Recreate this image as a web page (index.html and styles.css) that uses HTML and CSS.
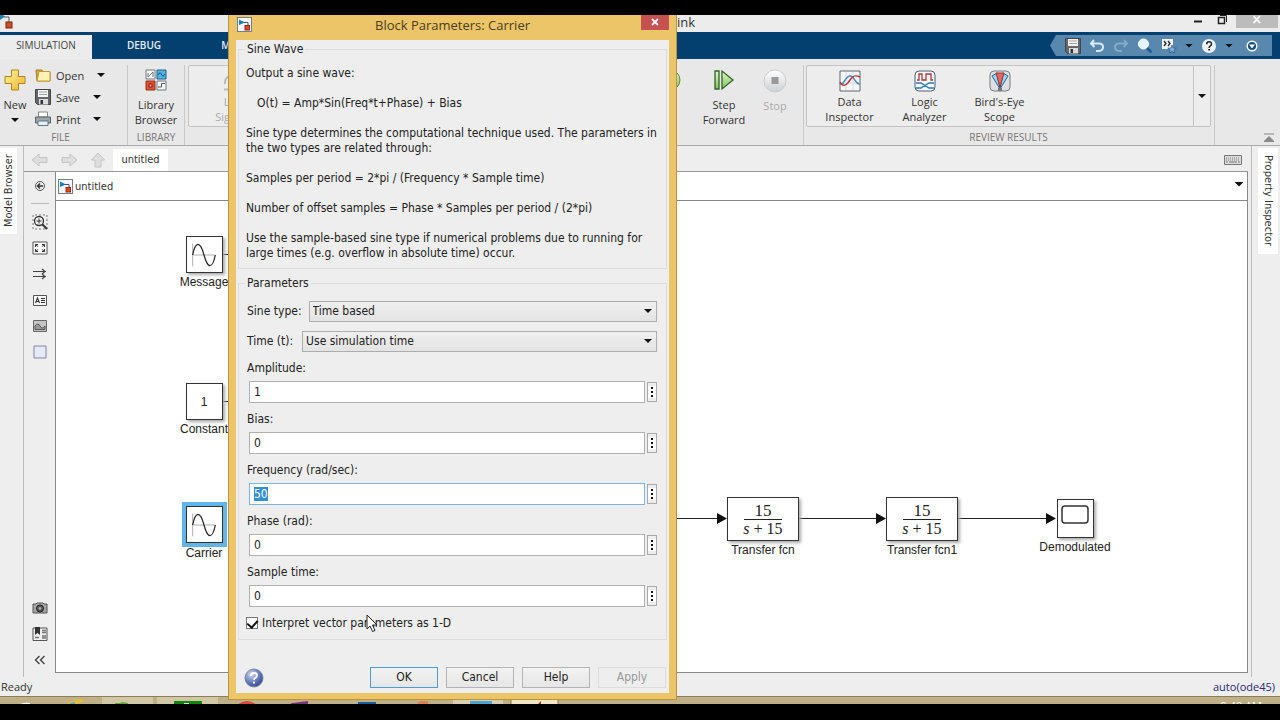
FILE: index.html
```html
<!DOCTYPE html>
<html lang="en">
<head>
<meta charset="utf-8">
<title>Simulink</title>
<link rel="stylesheet" href="styles.css">
</head>
<body>
<svg class="defs" aria-hidden="true">
  <defs>
    <linearGradient id="gold" x1="0" y1="0" x2="1" y2="1"><stop offset="0" stop-color="#fff3a0"/><stop offset="1" stop-color="#eeb32c"/></linearGradient>
    <linearGradient id="paper" x1="0" y1="0" x2="0" y2="1"><stop offset="0" stop-color="#fff"/><stop offset="1" stop-color="#ccd0d4"/></linearGradient>
    <linearGradient id="green" x1="0" y1="0" x2="0" y2="1"><stop offset="0" stop-color="#e2f7d0"/><stop offset="1" stop-color="#7dc453"/></linearGradient>
    <radialGradient id="orb" cx=".35" cy=".3" r=".75"><stop offset="0" stop-color="#d4dcf2"/><stop offset=".6" stop-color="#6379b8"/><stop offset="1" stop-color="#34488a"/></radialGradient>
    <symbol id="model" viewBox="0 0 15 15"><rect x=".5" y=".5" width="14" height="14" fill="#f5f6f8" stroke="#777d85"/><path d="M2 2.500 8 5.500 2 8z" fill="#167fb3"/><path d="M7 5.500h4V9" fill="none" stroke="#3b5a72"/><rect x="8" y="8.500" width="4.500" height="4.500" fill="#da4a24" stroke="#8f2b12"/></symbol>
    <symbol id="disk" viewBox="0 0 16 16"><path d="M.5.5h15v15h-13l-2-2z" fill="#65686b" stroke="#424548"/><path d="M3 1h10v7H3z" fill="#f4f4f4"/><path d="M4 3h8M4 5.500h8" stroke="#a2a4a6"/><path d="M4 10h9v5.500H4z" fill="#dadcde"/><path d="M5.500 11h2.500v4H5.500z" fill="#333"/></symbol>
    <symbol id="sine" viewBox="0 0 36 36"><path d="M6 6v24M6 18h24" stroke="#aaa" fill="none"/><path d="M6 18C9 3 14 3 18 18s9 15 12 0" fill="none" stroke="#222" stroke-width="1.300"/></symbol>
  </defs>
</svg>

<div class="screen">
  <header class="titlebar">
    <svg class="title-icon" viewBox="0 0 14 14"><path d="M0 0h3l2 1.500L0 5z" fill="#1b82b5"/><path d="M4 2h5v5" fill="none" stroke="#555"/><rect x="6" y="7" width="6" height="6" fill="#d64a26" stroke="#74260f"/></svg>
    <h1 class="title-text">untitled * - Simulink</h1>
    <div class="window-buttons">
      <button class="win-btn" aria-label="Minimize"><svg width="10" height="10"><path d="M1 6.500h8" stroke="#222" stroke-width="2"/></svg></button>
      <button class="win-btn" aria-label="Restore"><svg width="10" height="10"><path d="M1.500 2.500h6v6h-6z" fill="none" stroke="#222" stroke-width="1.500"/><path d="M3 .5h6.500V7" fill="none" stroke="#222"/></svg></button>
      <button class="win-btn win-close" aria-label="Close"><svg width="10" height="10"><path d="M1.500 1l6.500 7M8 1 1.500 8" stroke="#fff" stroke-width="1.800"/></svg></button>
    </div>
  </header>

  <nav class="tabs">
    <button class="tab tab-active">SIMULATION</button>
    <button class="tab">DEBUG</button>
    <button class="tab">MODELING</button>
    <div class="quick">
      <button class="q q-save" aria-label="Save"><svg width="16" height="16"><use href="#disk"/></svg></button>
      <button class="q" aria-label="Undo"><svg width="16" height="16"><path d="M5 2 2 5.500 5.500 9M2.500 5.500H10q4 0 4 3.500t-4 4H7" fill="none" stroke="#d9e9f5" stroke-width="2"/></svg></button>
      <button class="q" aria-label="Redo"><svg width="16" height="16"><path d="m11 2 3 3.500L10.500 9M13.500 5.500H6q-4 0-4 3.500t4 4h3" fill="none" stroke="#86a9c5" stroke-width="2"/></svg></button>
      <button class="q" aria-label="Search"><svg width="16" height="16"><path d="m9 9 5.500 5.500" stroke="#1d5c98" stroke-width="2.500"/><circle cx="6.500" cy="6" r="5" fill="#e5f3fb" stroke="#fff"/></svg></button>
      <button class="q" aria-label="Favorites"><svg width="16" height="16"><path d="M1 1h11v10H1z" fill="#f2f3f4"/><path d="m3 3 2 2.500L3 8M7 3l2 2.500L7 8" fill="none" stroke="#222" stroke-width="1.300"/><path d="m11 7 1.300 3 3 .2-2.300 2 .7 3L11 13.500 8.400 15.200l.7-3-2.300-2 3-.2z" fill="#7fb0dc" stroke="#315f8d" stroke-width=".8"/></svg></button>
      <i class="caret"></i>
      <button class="q" aria-label="Help"><svg width="16" height="16"><circle cx="8" cy="8" r="7" fill="#eef3f7"/><path d="M5.700 6.200q0-2.500 2.400-2.500t2.400 2.200q0 1.300-1.200 2T8.100 10" fill="none" stroke="#222" stroke-width="1.500"/><path d="M7.300 11h1.600v1.500H7.300z"/></svg></button>
      <i class="caret"></i>
      <button class="q q-last" aria-label="Customize"><svg width="16" height="16"><circle cx="8" cy="8" r="4.800" fill="#17507f" stroke="#fff" stroke-width="1.500"/><path d="M5 6.500h6L8 10.500z" fill="#fff"/></svg></button>
    </div>
  </nav>

  <section class="strip">
    <div class="section section-file">
      <div class="section-body">
        <button class="big big-new"><svg width="22" height="22"><path d="M7.500 1h7v6.500H21v7h-6.500V21h-7v-6.500H1v-7h6.500z" fill="url(#gold)" stroke="#b4841a"/></svg><span>New</span><i class="caret"></i></button>
        <div class="file-list">
          <button class="row-btn"><svg width="16" height="16"><path d="M1 3h6l1 2h7v9H2z" fill="#d5a436" stroke="#a8802a"/><path d="M4 4.500h11v9.500H2z" fill="#fff2b2" stroke="#c2983c"/></svg><span class="row-open">Open</span><i class="caret"></i></button>
          <button class="row-btn"><svg width="16" height="16"><use href="#disk"/></svg><span>Save</span><i class="caret"></i></button>
          <button class="row-btn"><svg width="16" height="16"><path d="M3.500 1h9v5h-9z" fill="#fff" stroke="#888"/><path d="M.5 6h15v6H.5z" fill="#9ca5ad" stroke="#5a6269"/><path d="M3 10h10v4.500H3z" fill="#e2f0fa" stroke="#68737d"/></svg><span>Print</span><i class="caret"></i></button>
        </div>
      </div>
      <div class="section-name">FILE</div>
    </div>
    <div class="section section-library">
      <div class="section-body">
        <button class="big"><svg width="22" height="22"><path d="M1 1h9v9H1z" fill="#f4f5f6" stroke="#717980"/><path d="M3 8V4M3 8l5-5v5" fill="none" stroke="#777"/><path d="M12 1h9v9h-9z" fill="#50b5e5" stroke="#225f84"/><path d="M13 6q2-4 3.500-.5T20 5" fill="none" stroke="#134f78"/><path d="M1 12h9v9H1z" fill="#e2512b" stroke="#8f3118"/><path d="M4 15h3v3H4z" fill="#f7b597" stroke="#812"/><path d="M12 12h9v9h-9z" fill="#f4f5f6" stroke="#717980"/><path d="M13 18h3.500v-3.500H20" fill="none" stroke="#555"/></svg><span>Library<br>Browser</span></button>
      </div>
      <div class="section-name">LIBRARY</div>
    </div>
    <div class="section section-prepare">
      <div class="section-body"><div class="gallery gallery-off">
        <button class="big" disabled><svg width="26" height="22"><path d="M5 14a8 8 0 0 1 12-8M9 14a4 4 0 0 1 6-4M4 19.500h16" fill="none" stroke="#b9b9b9" stroke-width="2"/></svg><span>Log<br>Signals</span></button>
      </div></div>
    </div>
    <div class="section section-simulate">
      <div class="section-body">
        <svg class="run" viewBox="0 0 22 22"><circle cx="11" cy="11" r="10" fill="url(#green)" stroke="#568b36"/></svg>
        <button class="big big-step"><svg width="22" height="22"><path d="M2 2h4v18H2z" fill="url(#green)" stroke="#2f642b" stroke-width="1.300"/><path d="M9 2v18l11-9z" fill="url(#green)" stroke="#2f642b" stroke-width="1.300"/></svg><span>Step<br>Forward</span></button>
        <button class="big big-stop" disabled><svg width="24" height="24"><circle cx="12" cy="12" r="11" fill="url(#paper)" stroke="#ccc"/><path d="M8.500 8h7v7h-7z" fill="#999"/></svg><span>Stop</span></button>
      </div>
    </div>
    <div class="section section-review">
      <div class="section-body"><div class="gallery">
        <button class="big"><svg width="22" height="22"><path d="M1 1h20v20H1z" fill="#f6f7f9" stroke="#60666c"/><path d="M2 13h18M7 2v18M14 2v18" stroke="#d9dce0"/><path d="M1 13C4 18 6 6 11 6s5 9 10 8" fill="none" stroke="#4a8dc0" stroke-width="1.500"/><path d="M1 12c3 6 7 3 10-2s6-5 10-3" fill="none" stroke="#b53c39" stroke-width="1.500"/></svg><span>Data<br>Inspector</span></button>
        <button class="big"><svg width="22" height="22"><rect x="1" y="1" width="20" height="20" rx="4" fill="#f5f7f9" stroke="#4a6078"/><path d="M3 10h2V4h3v6h4V4h5v6h2" fill="none" stroke="#a63935" stroke-width="1.300"/><path d="M2 13h5l8 5h5M2 18h5l8-5h5" fill="none" stroke="#2d78ac" stroke-width="1.300"/></svg><span>Logic<br>Analyzer</span></button>
        <button class="big"><svg width="22" height="22"><rect x="1" y="1" width="20" height="20" rx="4" fill="#dde0e2" stroke="#767c80"/><path d="m11 19-8-13 5-3z" fill="#99d3ef" stroke="#27698f"/><path d="m11 19 8-13-5-3z" fill="#99d3ef" stroke="#27698f"/><path d="m11 17-4-14h8z" fill="#e46865" stroke="#9d3033"/><path d="M9 18h4v3H9z" fill="#777"/></svg><span>Bird's-Eye<br>Scope</span></button>
        <button class="gallery-more" aria-label="More"><i class="caret"></i></button>
      </div></div>
      <div class="section-name">REVIEW RESULTS</div>
    </div>
    <div class="strip-end"><button class="collapse" aria-label="Collapse"><svg width="10" height="9"><path d="M0 1h10M0 8.500h10L5 3.500z" fill="#888" stroke="#888"/></svg></button></div>
  </section>

  <main class="work">
    <aside class="side side-left"><button class="side-tab">Model Browser</button></aside>
    <div class="editor">
      <div class="doc-tabs">
        <svg width="18" height="16"><path d="m1 8 7-6v3.500h8v5H8V14z" fill="#dedede" stroke="#c4c4c4"/></svg>
        <svg width="18" height="16"><path d="m17 8-7-6v3.500H2v5h8V14z" fill="#dedede" stroke="#c4c4c4"/></svg>
        <svg width="18" height="16"><path d="m9 1 6.500 7H12v7H6V8H2.500z" fill="#dedede" stroke="#c4c4c4"/></svg>
        <button class="doc-tab">untitled</button>
        <svg class="keyboard" width="18" height="10"><path d="M.5.500h17v9H.5z" fill="#ddd" stroke="#777"/><path d="M2 3h14M2 5h14" stroke="#777" stroke-dasharray="1 1"/><path d="M2 7h2M5 7h8M14 7h2" stroke="#777"/></svg>
      </div>
      <div class="editor-body">
        <div class="palette">
          <button class="tool tool-first" aria-label="Hide browser"><svg width="16" height="16"><circle cx="8" cy="8" r="4.500" fill="none" stroke="#555"/><path d="M11 8H6M8 5.500 5.500 8 8 10.500" fill="none" stroke="#333" stroke-width="1.400"/></svg></button>
          <button class="tool" aria-label="Zoom"><svg width="16" height="16"><path d="M1 15V1h14v14z" fill="none" stroke="#777" stroke-dasharray="2 2"/><path d="m10 10 5 5" stroke="#333" stroke-width="2"/><circle cx="7" cy="7" r="4.500" fill="#f1f1f1" stroke="#333" stroke-width="1.300"/><path d="M4.500 7h5M7 4.500v5" stroke="#333"/></svg></button>
          <button class="tool" aria-label="Fit to view"><svg width="16" height="16"><path d="M1 2h14v12H1z" fill="#f7f7f7" stroke="#555"/><path d="M3.500 7V4.500H6M3.500 4.500 6 6.500M12.500 7V4.500H10M12.500 4.500 10 6.500M3.500 9v2.500H6M3.500 11.500 6 9.500M12.500 9v2.500H10M12.500 11.500 10 9.500" fill="none" stroke="#333"/></svg></button>
          <button class="tool" aria-label="Sample time"><svg width="16" height="16"><path d="M1 5.500h13M1 10.500h13M10 3l3 2.500L10 8M10 8l3 2.500-3 2.500" fill="none" stroke="#444" stroke-width="1.200"/></svg></button>
          <button class="tool" aria-label="Annotation"><svg width="16" height="16"><path d="M1.500 3.500h13v10h-13z" fill="#f7f7f7" stroke="#555"/><path d="m3.500 11 2-5 2 5M4.500 9.500h2M9 6.500h4M9 8.500h4M9 10.500h4" fill="none" stroke="#333" stroke-width="1.100"/></svg></button>
          <button class="tool" aria-label="Image"><svg width="16" height="16"><path d="M1.500 2.500h13v11h-13z" fill="#c4c4c4" stroke="#666"/><path d="M3 11.500V8q3-4 5 0t5 0v3.500z" fill="#9a9a9a" stroke="#555"/></svg></button>
          <button class="tool" aria-label="Area"><svg width="16" height="16"><path d="M2 2h12v12H2z" fill="#e6e9f8" stroke="#7d879b"/></svg></button>
          <button class="tool tool-camera" aria-label="Screenshot"><svg width="16" height="16"><path d="M1 4h3l1-1h6l1 1h3v9H1z" fill="#a4a4a4" stroke="#555"/><circle cx="8" cy="8.500" r="3.500" fill="#555" stroke="#222"/><circle cx="8" cy="8.500" r="1.400" fill="#aaa"/></svg></button>
          <button class="tool" aria-label="Reports"><svg width="16" height="16"><path d="M1 2h14v12.500H1z" fill="#eee" stroke="#555"/><path d="M3 1h5v8L5.500 7 3 9z" fill="#333"/><path d="M10 4.500h4M10 6.500h4M10 10h4M10 12h4M3 11.500h4" stroke="#777" stroke-width="1.500"/></svg></button>
          <button class="tool" aria-label="Collapse palette"><svg width="16" height="16"><path d="M7.500 4 3.500 8l4 4M12.500 4l-4 4 4 4" fill="none" stroke="#444" stroke-width="1.400"/></svg></button>
        </div>
        <div class="view">
          <div class="crumb"><svg width="15" height="15"><use href="#model"/></svg><span>untitled</span><i class="caret caret-big"></i></div>
          <div class="canvas">
            <svg class="wires"><path d="M165 53.500h9M165 200.500h9M600 317.500h64M742 317.500h80M901 317.500h91" stroke="#222" fill="none"/><path d="m661 312 10 5.500-10 5.500zM820 312l10 5.500-10 5.500zM990 312l10 5.500-10 5.500zM167 318l4 5.500-4 5.500z" fill="#111"/></svg>
            <div class="node node-message"><div class="block"><svg width="34" height="34"><use href="#sine"/></svg></div><span>Message</span></div>
            <div class="node node-constant"><div class="block">1</div><span>Constant</span></div>
            <div class="node node-carrier"><div class="block block-selected"><svg width="34" height="34"><use href="#sine"/></svg></div><span>Carrier</span></div>
            <div class="node node-tf"><div class="block block-tf"><span class="num">15</span><span class="den"><em>s</em> + 15</span></div><span>Transfer fcn</span></div>
            <div class="node node-tf1"><div class="block block-tf"><span class="num">15</span><span class="den"><em>s</em> + 15</span></div><span>Transfer fcn1</span></div>
            <div class="node node-scope"><div class="block block-scope"><svg width="28" height="19"><rect x="1" y="1" width="26" height="17" rx="3" fill="none" stroke="#333" stroke-width="1.500"/></svg></div><span>Demodulated</span></div>
          </div>
        </div>
      </div>
    </div>
    <aside class="side side-right"><button class="side-tab side-tab-right">Property Inspector</button></aside>
  </main>

  <footer class="status"><span>Ready</span><a class="solver" href="#">auto(ode45)</a></footer>
  <div class="taskbar">
    <svg class="task-icons" width="560" height="8"><path d="M102 0h51v8h-51zM157 0h61v8h-61z" fill="#d2c7a5"/><path d="M453 0h50v8h-50z" fill="#d8ceb0"/><path d="M511 0h47v8h-47z" fill="#efe6c6" stroke="#877848"/><path d="M18 8q6-3 12-2v2z" fill="#fff"/><path d="M65 8q5-5 17-6l2 2-9 4z" fill="#e3bf38"/><path d="M68 8q3-3 7-3v3z" fill="#5ba8d3"/><path d="M115 8V6h5l2-1 6 1v2z" fill="#63a63e"/><path d="M174 4h28v4h-28z" fill="#11860f"/><path d="M184 6h5v2h-5z" fill="#d4ecd3"/><path d="M237 8q10-8 20 0z" fill="#d94b3a"/><path d="M292 6l16-2v4h-20z" fill="#78357d"/><path d="M358 5h18v3h-18z" fill="#1b5ba0"/><path d="M416 8l4-4h8v4z" fill="#dd8054"/><path d="M470 4h22v4h-22z" fill="#4fa6d6"/><path d="m537 8 4-4v4z" fill="#a13916"/></svg>
    <span class="clock">9:40 AM</span>
  </div>

  <form class="dialog" aria-labelledby="dialog-title">
    <div class="dialog-bar">
      <svg width="15" height="15"><use href="#model"/></svg>
      <h2 id="dialog-title">Block Parameters: Carrier</h2>
      <button type="button" class="dialog-close" aria-label="Close dialog"><svg width="10" height="10"><path d="m2 2 6 6M8 2 2 8" stroke="#fff" stroke-width="1.800"/></svg></button>
    </div>
    <div class="dialog-body">
      <fieldset class="about">
        <legend>Sine Wave</legend>
        <p>Output a sine wave:</p>
        <p class="formula">O(t) = Amp*Sin(Freq*t+Phase) + Bias</p>
        <p>Sine type determines the computational technique used. The parameters in<br>the two types are related through:</p>
        <p>Samples per period = 2*pi / (Frequency * Sample time)</p>
        <p>Number of offset samples = Phase * Samples per period / (2*pi)</p>
        <p>Use the sample-based sine type if numerical problems due to running for<br>large times (e.g. overflow in absolute time) occur.</p>
      </fieldset>
      <fieldset class="params">
        <legend>Parameters</legend>
        <div class="pick"><label for="sinetype">Sine type:</label><div class="select-wrap"><select id="sinetype"><option>Time based</option></select><i class="caret"></i></div></div>
        <div class="pick pick-time"><label for="time">Time (t):</label><div class="select-wrap"><select id="time"><option>Use simulation time</option></select><i class="caret"></i></div></div>
        <div class="field"><label for="amp">Amplitude:</label><div class="entry"><input id="amp" type="text" value="1"><button type="button" class="dots" aria-label="Amplitude options"></button></div></div>
        <div class="field"><label for="bias">Bias:</label><div class="entry"><input id="bias" type="text" value="0"><button type="button" class="dots" aria-label="Bias options"></button></div></div>
        <div class="field"><label for="freq">Frequency (rad/sec):</label><div class="entry"><input id="freq" type="text" value="50"><button type="button" class="dots" aria-label="Frequency options"></button></div></div>
        <div class="field"><label for="phase">Phase (rad):</label><div class="entry"><input id="phase" type="text" value="0"><button type="button" class="dots" aria-label="Phase options"></button></div></div>
        <div class="field"><label for="sample">Sample time:</label><div class="entry"><input id="sample" type="text" value="0"><button type="button" class="dots" aria-label="Sample time options"></button></div></div>
        <div class="check"><input id="interp" type="checkbox" checked><label for="interp">Interpret vector parameters as 1-D</label></div>
      </fieldset>
      <div class="actions">
        <button type="button" class="help" aria-label="Help"><svg width="20" height="20"><circle cx="10" cy="10" r="9" fill="url(#orb)" stroke="#7b87ab"/><path d="M7 8q0-3 3-3t3 2.500q0 1.500-1.500 2.300T10 12" fill="none" stroke="#fff" stroke-width="1.800"/><path d="M9 13.500h2v2H9z" fill="#fff"/></svg></button>
        <button type="button" class="action action-ok">OK</button>
        <button type="button" class="action">Cancel</button>
        <button type="button" class="action">Help</button>
        <button type="button" class="action" disabled>Apply</button>
      </div>
    </div>
    <svg class="cursor" width="13" height="19"><path d="M1 1v14l3-3 2.500 5.500 2.500-1L6.500 11H11z" fill="#fff" stroke="#222"/></svg>
  </form>
</div>
<script src="app.js"></script>
</body>
</html>
```
FILE: app.js
```js
document.getElementById("freq").select();
```
FILE: styles.css
```css
* { box-sizing: border-box; }
body { margin: 0; background: #000; color: #333; font: 11px/15px "Open Sans", "Noto Sans", sans-serif; }
button { margin: 0; padding: 0; border: 0; background: none; color: inherit; font: inherit; }
svg { display: block; flex: none; }
h1, h2, p { margin: 0; font-size: inherit; font-weight: normal; }
.defs { position: absolute; width: 0; height: 0; }
.caret { display: block; flex: none; width: 8px; height: 4px; background: #111; clip-path: polygon(0 0, 100% 0, 50% 100%); }
.caret-big { width: 10px; height: 5px; }

.screen { position: relative; display: flex; flex-direction: column; height: 100vh; padding: 15px 0 16px; overflow: hidden; }
.titlebar { display: flex; height: 17px; background: #ececec; }
.title-icon { width: 14px; height: 14px; }
.title-text { width: 681px; text-align: right; font-size: 13px; line-height: 14px; }
.window-buttons { display: flex; margin-left: auto; margin-right: 2px; }
.win-btn { display: flex; justify-content: center; width: 24px; height: 12px; }
.win-close { width: 42px; height: 13px; margin-left: 2px; background: #bcbcbc; }

.tabs { display: flex; align-items: flex-end; height: 27px; background: #03406f; color: #e6eef5; }
.tab { width: 104px; height: 24px; padding-bottom: 4px; font-size: 10px; font-weight: 600; }
.tab-active { width: 92px; background: #ececec; color: #444; font-weight: normal; }
.quick { display: flex; align-items: center; gap: 8px; height: 21px; margin: 0 8px 3px auto; padding: 0 12px 0 15px; background: #5888ad; clip-path: polygon(0 50%, 6px 0, 100% 0, 100% 100%, 6px 100%); }
.q-last { margin-left: 3px; }

.strip { display: flex; height: 87px; background: #e8e8e8; border-bottom: 1px solid #aaa; }
.section { display: flex; flex-direction: column; margin: 6px 0 0; border-right: 1px solid #c8c8c8; }
.section-body { display: flex; height: 62px; }
.section-name { padding-top: 3px; text-align: center; font-size: 10px; line-height: 15px; color: #777; }
.big { display: flex; flex-direction: column; align-items: center; gap: 6px; padding-top: 4px; line-height: 15px; }
.big:disabled { color: #aaa; }
.section-file { width: 128px; }
.section-file .section-name { padding-right: 6px; }
.big-new { width: 30px; }
.file-list { display: flex; flex-direction: column; padding-left: 5px; margin-top: -1px; }
.row-btn { display: flex; flex: none; align-items: center; height: 22px; gap: 5px; text-align: left; }
.row-btn span { width: 32px; }
.row-btn .row-open { width: 36px; }
.section-library { width: 57px; align-items: center; }
.section-prepare { width: 460px; border: 0; padding-left: 3px; }
.gallery { display: flex; flex: 1; height: 62px; border: 1px solid #c4c4c4; border-radius: 2px; background: #ededed; }
.gallery .big { width: 75px; gap: 2px; }
.gallery-off .big { width: 88px; }
.section-simulate { width: 159px; }
.run { width: 22px; height: 22px; margin: 4px 0 0 14px; }
.big-step { width: 46px; margin-left: 20px; }
.big-stop { width: 50px; margin-left: 3px; gap: 5px; }
.section-review { flex: 1; padding: 0 3px 0 2px; }
.section-review .gallery { padding-left: 5px; }
.gallery-more { display: flex; align-items: center; justify-content: center; width: 17px; margin-left: auto; border-left: 1px solid #c4c4c4; }
.strip-end { display: flex; align-items: flex-end; justify-content: flex-end; width: 65px; padding: 0 6px 3px; }

.work { display: flex; flex: 1; min-height: 0; background: #eee; }
.side { display: flex; align-items: flex-start; width: 24px; padding-top: 2px; border-right: 1px solid #bbb; }
.side-tab { width: 17px; height: 86px; background: #fff; writing-mode: vertical-rl; transform: rotate(180deg); font: 11px/17px "DejaVu Sans Condensed", sans-serif; text-align: center; white-space: nowrap; }
.side-right { width: 29px; padding-left: 6px; border: 0; border-left: 1px solid #bbb; }
.side-tab-right { width: 20px; height: 106px; transform: none; line-height: 20px; }
.editor { display: flex; flex: 1; flex-direction: column; min-width: 0; margin-bottom: 4px; padding-right: 3px; }
.doc-tabs { display: flex; align-items: center; gap: 11px; height: 26px; padding: 3px 0 0 7px; border-bottom: 1px solid #999; }
.doc-tab { align-self: flex-end; width: 55px; height: 22px; margin-left: -5px; background: #fff; font: 11px/22px "DejaVu Sans Condensed", sans-serif; }
.keyboard { margin: 0 6px 0 auto; }
.editor-body { display: flex; flex: 1; min-height: 0; }
.palette { display: flex; flex-direction: column; align-items: center; gap: 10px; width: 31px; padding: 6px 0 5px; }
.tool { display: block; height: 16px; }
.tool-first { display: flex; align-items: flex-start; height: 26px; width: 18px; padding-left: 1px; border-bottom: 1px solid #bbb; }
.tool-camera { margin-top: auto; }
.view { display: flex; flex: 1; flex-direction: column; border: 1px solid #888; border-top: 0; background: #fff; min-width: 0; }
.crumb { display: flex; align-items: center; gap: 2px; height: 29px; padding: 0 3px 0 2px; border-bottom: 1px solid #888; font: 11px/15px "DejaVu Sans Condensed", sans-serif; }
.crumb .caret { margin: 0 0 4px auto; }
.canvas { position: relative; flex: 1; overflow: hidden; }

.wires { position: absolute; width: 100%; height: 100%; }
.node { position: absolute; display: flex; flex-direction: column; align-items: center; gap: 2px; width: 80px; font: 12px/14px "Liberation Sans", Arial, sans-serif; color: #222; white-space: nowrap; }
.block { display: flex; align-items: center; justify-content: center; width: 37px; height: 37px; border: 1px solid #333; background: #fff; box-shadow: 2px 2px 3px #aaa; }
.block-selected { box-shadow: 0 0 0 4px #62b5e8; }
.block-tf { flex-direction: column; width: 72px; height: 44px; font: 17px/17px "Liberation Serif", serif; }
.num { width: 38px; border-bottom: 1px solid #222; text-align: center; }
.den { font-size: 16px; }
.block-scope { height: 39px; align-items: flex-start; padding-top: 5px; }
.node-message { left: 108px; top: 35px; }
.node-constant { left: 108px; top: 182px; }
.node-carrier { left: 108px; top: 305px; gap: 3px; }
.node-tf { left: 667px; top: 296px; }
.node-tf1 { left: 826px; top: 296px; }
.node-scope { left: 979px; top: 298px; }

.status { display: flex; justify-content: space-between; height: 19px; padding: 2px 5px 0 1px; background: #eee; }
.solver { color: #292975; text-decoration: none; }
.taskbar { display: flex; justify-content: space-between; height: 8px; overflow: hidden; border-top: 1px solid #8b7e58; background: #bfb088; }
.clock { margin-right: 18px; padding-top: 3px; color: #fff; line-height: 12px; }

.dialog { position: absolute; left: 228px; top: 15px; width: 449px; padding: 0 7px 6px; background: #ecc568; border: 1px solid #ba9540; border-top: 0; color: #222; font: 12px/15px "DejaVu Sans Condensed", "Noto Sans", sans-serif; }
.dialog-bar { display: flex; align-items: flex-start; height: 25px; }
.dialog-bar > svg { margin: 2px 0 0 1px; }
.dialog-bar h2 { flex: 1; padding-left: 12px; text-align: center; font: 13px/21px "Open Sans", sans-serif; color: #4a3d20; }
.dialog-close { display: flex; justify-content: center; width: 28px; height: 15px; padding-top: 2px; background: #c75050; }
.dialog-body { padding: 1px 2px 5px; background: #eee; }
fieldset { min-width: 0; margin: 0; border: 1px solid #ddd; }
legend { padding: 0 2px; line-height: 16px; }
.about { padding: 9px 7px 7px; }
.about p + p { margin-top: 15px; }
.about legend { margin-left: -1px; }
.formula { padding-left: 11px; }
.params { display: flex; flex-direction: column; gap: 8px; margin-top: 6px; padding: 10px 8px 8px; }
.params legend { margin-left: -2px; }
.pick { display: flex; align-items: center; height: 21px; margin-right: 1px; gap: 7px; }
.pick-time { margin: 1px 1px 0 0; gap: 9px; }
.select-wrap { position: relative; flex: 1; }
select { display: block; width: 100%; height: 21px; padding: 0 3px; border: 1px solid #adadad; border-radius: 0; appearance: none; background: linear-gradient(#f0f0f0, #e3e3e3); color: #222; font: inherit; }
.select-wrap .caret { position: absolute; right: 5px; top: 8px; pointer-events: none; }
.field { display: flex; flex-direction: column; gap: 5px; }
.field label { line-height: 16px; }
.entry { display: flex; align-items: center; gap: 2px; padding: 0 1px 0 2px; }
.entry input { flex: 1; min-width: 0; height: 22px; padding: 0 4px; border: 1px solid #b0b0b0; background: #fff; color: #222; font: inherit; }
.entry input:focus { outline: 0; border-color: #7db6dc; }
.entry input::selection { background: #3390d8; color: #fff; }
.dots { width: 10px; height: 20px; border: 1px solid #aaa; background: radial-gradient(circle, #111 1px, #fff 1px) center / 8px 4px repeat-y content-box; padding: 3px 0; background-color: #fff; }
.check { display: flex; align-items: center; gap: 4px; height: 16px; margin-left: -1px; }
.check input { appearance: none; width: 12px; height: 12px; margin: 0; border: 1px solid #777; background: #fff; display: flex; justify-content: center; }
.check input:checked::after { content: ""; width: 5px; height: 8px; border: solid #111; border-width: 0 2px 2px 0; transform: rotate(42deg); }
.actions { display: flex; gap: 8px; align-items: center; margin-top: 27px; padding: 0 1px 0 6px; }
.help { margin-right: auto; }
.action { width: 68px; height: 21px; border: 1px solid #b4b4b4; background: linear-gradient(#f2f2f2, #e6e6e6); }
.action-ok { border-color: #4a9fd0; }
.action:disabled { color: #999; border-color: #ddd; background: #eee; }
.cursor { position: absolute; left: 137px; top: 599px; }
```
